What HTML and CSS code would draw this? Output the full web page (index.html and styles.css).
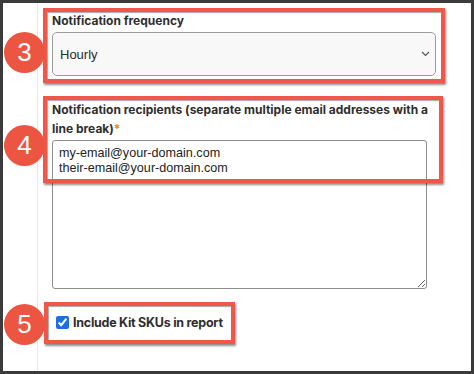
FILE: index.html
```html
<!DOCTYPE html>
<html>
<head>
	<meta charset="utf-8" />
	<title>Report settings</title>
	<link rel="stylesheet" href="styles.css">
</head>
<body>
	<div class="frame">
		<div class="panel">
			<div class="field">
				<label class="label">Notification frequency</label>
				<div class="select">
					<span>Hourly</span>
					<svg width="9" height="6" viewBox="0 0 9 6"><path d="M1 1l3.5 3.5L8 1" fill="none" stroke="#555" stroke-width="1.2"/></svg>
				</div>
			</div>
			<div class="field field-2">
				<label class="label">Notification recipients (separate multiple email addresses with a<br>line break)<span class="req">*</span></label>
				<textarea class="area">my-email@your-domain.com
their-email@your-domain.com</textarea>
			</div>
			<div class="check">
				<input type="checkbox" checked>
				<span>Include Kit SKUs in report</span>
			</div>
		</div>
	</div>

	<!-- callouts drawn over the screenshot -->
	<div class="box box-3"></div>
	<div class="box box-4"></div>
	<div class="box box-5"></div>
	<div class="step step-3">3</div>
	<div class="step step-4">4</div>
	<div class="step step-5">5</div>
</body>
</html>
```

FILE: styles.css
```css
* { margin:0; padding:0; box-sizing:border-box; }
body { position:relative; width:474px; height:374px; overflow:hidden; background:#fff; font-family:"Liberation Sans", Arial, sans-serif; color:#2b2b2b; }

.frame { height:374px; border:3px solid #3b3b3b; background:#fff; }
.panel { margin-left:34px; height:100%; border-left:1px solid #e6e6e6; padding:10px 0 0 14px; }

.label { display:block; font-family:Inter, "Liberation Sans", sans-serif; font-weight:700; font-size:12px; line-height:16px; color:#2e2e2e; }
.field-2 .label { line-height:19px; }
.req { color:#e0823a; }

.select { margin-top:3px; width:384px; height:44px; border:1px solid #9b9b9b; border-radius:5px; background:#f8f8f8; display:flex; align-items:center; justify-content:space-between; padding:0 5px 0 7px; font-size:13px; }

.field-2 { margin-top:24px; }
.area { display:block; margin-top:2px; width:375px; height:149px; border:1px solid #8d8d8d; border-radius:3px; padding:5px 6px; font-family:"Liberation Sans", Arial, sans-serif; font-size:12.6px; line-height:15px; color:#222; resize:vertical; outline:none; }

.check { margin-top:23px; display:flex; align-items:center; gap:4px; padding-left:4px; height:20px; font-family:Inter, "Liberation Sans", sans-serif; font-weight:700; font-size:12.5px; letter-spacing:-0.25px; color:#2e2e2e; }
.check input { width:13px; height:13px; accent-color:#1a6fe6; }

.box { position:absolute; border:4px solid #ef5849; box-shadow:1px 2px 2px rgba(0,0,0,.45), inset 1px 1px 1px rgba(0,0,0,.35); }
.box-3 { left:43px; top:8px; width:402px; height:75px; }
.box-4 { left:43px; top:96px; width:400px; height:87px; }
.box-5 { left:44px; top:302px; width:191px; height:42px; }

.step { position:absolute; left:4px; width:41px; height:41px; border-radius:50%; background:#ec5541; color:#fff; font-size:26px; line-height:41px; text-align:center; }
.step-3 { top:32px; }
.step-4 { top:125px; }
.step-5 { top:304px; }
```
